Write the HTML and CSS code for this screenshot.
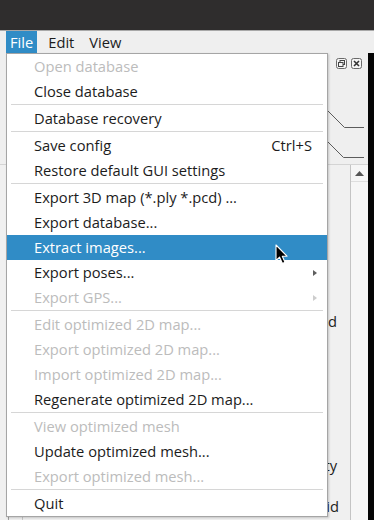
FILE: index.html
```html
<!DOCTYPE html>
<html>
<head>
<meta charset="utf-8">
<link rel="stylesheet" href="styles.css">
</head>
<body>
<div class="screen">
  <div class="titlebar"></div>
  <div class="menubar">
    <span class="mb-item active">File</span>
    <span class="mb-item">Edit</span>
    <span class="mb-item">View</span>
  </div>
  <div class="workspace">
    <div class="dock">
      <div class="dock-header">
        <svg class="dock-btn" width="11" height="11" viewBox="0 0 11 11"><rect x="0.5" y="0.5" width="10" height="10" rx="2" fill="#f4f4f4" stroke="#6a6a6a"/><rect x="4" y="2.5" width="4.5" height="4" fill="none" stroke="#444"/><rect x="2.5" y="4.5" width="4.5" height="4" fill="#f4f4f4" stroke="#444"/></svg>
        <svg class="dock-btn" width="11" height="11" viewBox="0 0 11 11"><rect x="0.5" y="0.5" width="10" height="10" rx="2" fill="#f4f4f4" stroke="#6a6a6a"/><path d="M3 3 L8 8 M8 3 L3 8" stroke="#333" stroke-width="1.6"/></svg>
      </div>
      <svg class="tabs" width="368" height="91" viewBox="0 73 368 91">
        <path d="M318 101 L344.5 127.5 L364 127.5" fill="none" stroke="#5c5c5c" stroke-width="1"/>
        <path d="M318 132 L343.5 157.5 L364 157.5" fill="none" stroke="#5c5c5c" stroke-width="1"/>
      </svg>
      <div class="scroll-area">
        <div class="content">
          <div class="row row-a">Show grid</div>
          <div class="row row-b">Cloud density</div>
          <div class="row row-c">Show occupancy grid</div>
          <div class="row row-d"><span class="tree-col"></span><span class="tree-text">Show in Graph View</span></div>
        </div>
        <div class="vscroll"><div class="vs-up"><svg width="9" height="5" viewBox="0 0 9 5"><path d="M0 5 L4.5 0 L9 5 Z" fill="#555"/></svg></div></div>
      </div>
    </div>
    <div class="viewer"></div>
  </div>

  <div class="popup">
    <div class="item disabled">Open database</div>
    <div class="item">Close database</div>
    <div class="sep"></div>
    <div class="item">Database recovery</div>
    <div class="sep"></div>
    <div class="item"><span class="label">Save config</span><span class="shortcut">Ctrl+S</span></div>
    <div class="item">Restore default GUI settings</div>
    <div class="sep"></div>
    <div class="item">Export 3D map (*.ply *.pcd) ...</div>
    <div class="item">Export database...</div>
    <div class="item selected">Extract images...</div>
    <div class="item"><span class="label">Export poses...</span><span class="arrow"></span></div>
    <div class="item disabled"><span class="label">Export GPS...</span><span class="arrow"></span></div>
    <div class="sep"></div>
    <div class="item disabled">Edit optimized 2D map...</div>
    <div class="item disabled">Export optimized 2D map...</div>
    <div class="item disabled">Import optimized 2D map...</div>
    <div class="item">Regenerate optimized 2D map...</div>
    <div class="sep"></div>
    <div class="item disabled">View optimized mesh</div>
    <div class="item">Update optimized mesh...</div>
    <div class="item disabled">Export optimized mesh...</div>
    <div class="sep"></div>
    <div class="item">Quit</div>
  </div>

  <svg class="cursor" width="14" height="21" viewBox="0 0 14 21"><path d="M1 1 L1 16.5 L4.6 13.2 L7.4 19.4 L10 18.2 L7.3 12.2 L12 12.2 Z" fill="#000" stroke="#fff" stroke-width="1.1" stroke-linejoin="round"/></svg>
</div>
</body>
</html>
```
FILE: styles.css
```css
* { box-sizing: border-box; }
html, body { margin: 0; padding: 0; }
body {
  width: 374px;
  height: 520px;
  overflow: hidden;
  font-family: "Open Sans", "Noto Sans", sans-serif;
  font-size: 14.7px;
  color: #1c1c1c;
  background: #efefef;
}
.screen {
  position: relative;
  width: 374px;
  height: 520px;
  overflow: hidden;
  display: flex;
  flex-direction: column;
}
.titlebar {
  height: 31px;
  background: #2f2d2d;
  border-bottom: 1px solid #a8a8a8;
  flex: none;
}
.menubar {
  height: 22px;
  flex: none;
  display: flex;
  gap: 7px;
  padding-left: 6px;
  background: #efefef;
  line-height: 22px;
}
.mb-item {
  padding: 0 4px;
  color: #1c1c1c;
}
.mb-item.active {
  background: #308cc6;
  color: #fff;
}
.workspace {
  flex: 1;
  display: flex;
  min-height: 0;
}
.dock {
  width: 368px;
  flex: none;
  display: flex;
  flex-direction: column;
  background: #efefef;
}
.dock-header {
  height: 20px;
  display: flex;
  justify-content: flex-end;
  align-items: flex-start;
  gap: 4px;
  padding: 5px 6px 0 0;
}
.dock-btn { display: block; }
.tabs { display: block; flex: none; }
.scroll-area {
  flex: 1;
  display: flex;
  min-height: 0;
  border-top: 1px solid #d4d4d4;
}
.content {
  flex: 1;
  display: flex;
  flex-direction: column;
  background: #f0f0f0;
}
.row {
  line-height: 20px;
  height: 20px;
  text-align: right;
  padding-right: 13px;
  white-space: nowrap;
  flex: none;
}
.row-a { margin-top: 146px; }
.row-b { margin-top: 124px; }
.row-c { margin-top: 21px; padding-right: 11px; }
.row-d {
  margin-top: -1px;
  display: flex;
  text-align: left;
  padding-right: 0;
}
.tree-col {
  width: 15px;
  margin-left: 8px;
  border-left: 1px solid #a0a0a0;
  border-right: 1px solid #c8c8c8;
}
.tree-text { margin-left: 75px; }
.vscroll {
  width: 18px;
  flex: none;
  background: #f6f6f6;
  border-left: 1px solid #c4c4c4;
}
.vs-up {
  height: 17px;
  display: flex;
  align-items: center;
  justify-content: center;
  border-bottom: 1px solid #dedede;
}
.vs-up svg { display: block; }
.viewer {
  flex: 1;
  background: #050505;
}

/* popup menu */
.popup {
  position: absolute;
  left: 6px;
  top: 53px;
  width: 322px;
  background: #ffffff;
  border: 1px solid #a5a5a5;
  box-shadow: 1px 1px 2px rgba(0,0,0,0.18);
  display: flex;
  flex-direction: column;
}
.item {
  height: 25px;
  line-height: 25px;
  padding: 0 5px 0 27px;
  display: flex;
  align-items: center;
  white-space: nowrap;
  color: #1c1c1c;
}
.item .label { flex: 1; }
.item.disabled { color: #bcbcbc; }
.item.selected { background: #308cc6; color: #fff; }
.shortcut { margin-right: 10px; }
.arrow {
  width: 0;
  height: 0;
  border-top: 3.5px solid transparent;
  border-bottom: 3.5px solid transparent;
  border-left: 4px solid #5e5e5e;
  margin-right: 5px;
}
.item.disabled .arrow { border-left-color: #cdcdcd; }
.sep {
  height: 1px;
  margin: 0 4px 1px;
  background: #d6d6d6;
}
.cursor {
  position: absolute;
  left: 275px;
  top: 244px;
}
```
